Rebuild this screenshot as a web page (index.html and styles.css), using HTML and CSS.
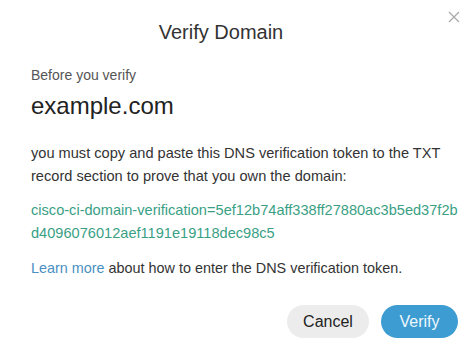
FILE: index.html
```html
<!DOCTYPE html>
<html lang="en">
<head>
<meta charset="utf-8">
<title>Verify Domain</title>
<link rel="stylesheet" href="styles.css">
</head>
<body>
<div class="dialog">
  <button class="close" aria-label="Close">
    <svg width="12" height="12" viewBox="0 0 12 12"><path d="M1 1L11 11M11 1L1 11" stroke="#a8a8a8" stroke-width="1.2" fill="none"/></svg>
  </button>
  <h1 class="title">Verify Domain</h1>
  <div class="label">Before you verify</div>
  <div class="domain">example.com</div>
  <p class="desc">you must copy and paste this DNS verification token to the TXT record section to prove that you own the domain:</p>
  <p class="token">cisco-ci-domain-verification=5ef12b74aff338ff27880ac3b5ed37f2b<wbr>d4096076012aef1191e19118dec98c5</p>
  <p class="learn"><a class="link" href="#">Learn more</a> about how to enter the DNS verification token.</p>
  <div class="actions">
    <button class="btn btn-cancel">Cancel</button>
    <button class="btn btn-verify">Verify</button>
  </div>
</div>
</body>
</html>
```
FILE: styles.css
```css
html, body {
  margin: 0;
  padding: 0;
  background: #ffffff;
}
body {
  font-family: "Liberation Sans", Arial, sans-serif;
  color: #333;
}
.dialog {
  position: relative;
  width: 474px;
  height: 355px;
  box-sizing: border-box;
  padding: 20px 16px 0 31px;
}
.close {
  position: absolute;
  top: 11px;
  left: 448px;
  width: 12px;
  height: 12px;
  padding: 0;
  border: 0;
  background: none;
  display: flex;
}
.title {
  margin: 0 47px 0 0;
  font-size: 20px;
  line-height: 24px;
  font-weight: normal;
  text-align: center;
  color: #333;
}
.label {
  margin-top: 22px;
  font-size: 14px;
  line-height: 18px;
  color: #555;
}
.domain {
  margin-top: 8px;
  font-size: 24px;
  line-height: 28px;
  color: #222;
}
.desc {
  margin: 22px 0 0;
  font-size: 14.6px;
  line-height: 23px;
  color: #333;
}
.token {
  margin: 11px 0 0;
  font-size: 14.6px;
  line-height: 23px;
  color: #3a9f85;
}
.learn {
  margin: 12px 0 0;
  font-size: 14.4px;
  line-height: 23px;
  color: #333;
}
.link {
  color: #4a8fc2;
  text-decoration: none;
}
.actions {
  margin-top: 25px;
  display: flex;
  justify-content: flex-end;
  gap: 12px;
}
.btn {
  height: 33px;
  border: 0;
  border-radius: 17px;
  font-family: "Liberation Sans", Arial, sans-serif;
  font-size: 16px;
  padding: 0;
}
.btn-cancel {
  width: 82px;
  background: #ececec;
  color: #222;
}
.btn-verify {
  width: 77px;
  background: #3d9cd2;
  color: #eef7fc;
}
```
